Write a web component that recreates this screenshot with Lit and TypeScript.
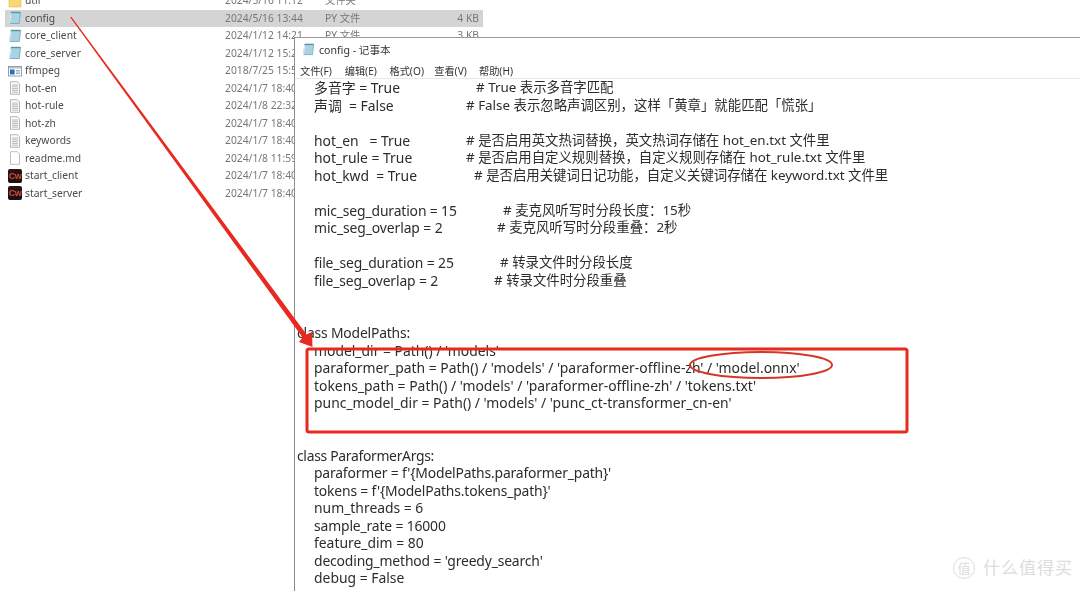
import { LitElement, html, css, svg } from "lit";
import { customElement } from "lit/decorators.js";

type Kind = "folder" | "note" | "exe" | "txt" | "blank" | "cw";
const files: { n: string; d: string; t?: string; s?: string; k: Kind; sel?: boolean }[] = [
  { n: "util", d: "2024/5/16 11:12", t: "文件夹", k: "folder" },
  { n: "config", d: "2024/5/16 13:44", t: "PY 文件", s: "4 KB", k: "note", sel: true },
  { n: "core_client", d: "2024/1/12 14:21", t: "PY 文件", s: "3 KB", k: "note" },
  { n: "core_server", d: "2024/1/12 15:21", k: "note" },
  { n: "ffmpeg", d: "2018/7/25 15:55", k: "exe" },
  { n: "hot-en", d: "2024/1/7 18:40", k: "txt" },
  { n: "hot-rule", d: "2024/1/8 22:32", k: "txt" },
  { n: "hot-zh", d: "2024/1/7 18:40", k: "txt" },
  { n: "keywords", d: "2024/1/7 18:40", k: "txt" },
  { n: "readme.md", d: "2024/1/8 11:59", k: "blank" },
  { n: "start_client", d: "2024/1/7 18:40", k: "cw" },
  { n: "start_server", d: "2024/1/7 18:40", k: "cw" },
];

// [code, comment, comment x, letter-spacing of the code]
const lines: [string, string?, number?, number?][] = [
  ["多音字 = True", "# True 表示多音字匹配", 476],
  ["声调  = False", "# False 表示忽略声调区别，这样「黄章」就能匹配「慌张」", 466],
  [""],
  ["hot_en   = True", "# 是否启用英文热词替换，英文热词存储在 hot_en.txt 文件里", 466],
  ["hot_rule = True", "# 是否启用自定义规则替换，自定义规则存储在 hot_rule.txt 文件里", 466],
  ["hot_kwd  = True", "# 是否启用关键词日记功能，自定义关键词存储在 keyword.txt 文件里", 474],
  [""],
  ["mic_seg_duration = 15", "# 麦克风听写时分段长度：15秒", 503, -0.14],
  ["mic_seg_overlap = 2", "# 麦克风听写时分段重叠：2秒", 497, -0.1],
  [""],
  ["file_seg_duration = 25", "# 转录文件时分段长度", 500, -0.11],
  ["file_seg_overlap = 2", "# 转录文件时分段重叠", 494, -0.15],
  [""],
  [""],
  ["!class ModelPaths:", undefined, undefined, -0.18],
  ["model_dir = Path() / 'models'"],
  ["paraformer_path = Path() / 'models' / 'paraformer-offline-zh' / 'model.onnx'"],
  ["tokens_path = Path() / 'models' / 'paraformer-offline-zh' / 'tokens.txt'"],
  ["punc_model_dir = Path() / 'models' / 'punc_ct-transformer_cn-en'"],
  [""],
  [""],
  ["!class ParaformerArgs:", undefined, undefined, -0.3],
  ["paraformer = f'{ModelPaths.paraformer_path}'", undefined, undefined, -0.18],
  ["tokens = f'{ModelPaths.tokens_path}'", undefined, undefined, -0.17],
  ["num_threads = 6"],
  ["sample_rate = 16000", undefined, undefined, -0.15],
  ["feature_dim = 80"],
  ["decoding_method = 'greedy_search'", undefined, undefined, -0.15],
  ["debug = False"],
];

const noteIcon = svg`<svg class="ic" viewBox="0 0 14 14"><path d="M3 1.5h9.5l-1.2 11H1.6z" fill="#a9d3e2" stroke="#6fa3b8" stroke-width=".8"/><path d="M3 1.5h9.5" stroke="#5f8da3" stroke-width="1.4"/><path d="M3 2.4 1.6 12.5" stroke="#dff0f5" stroke-width="1.2"/></svg>`;

function icon(k: Kind) {
  switch (k) {
    case "folder":
      return svg`<svg class="ic" viewBox="0 0 14 14"><path d="M1 2h4l1.5 1.5H13V13H1z" fill="#f8d775" stroke="#e2b84e" stroke-width=".6"/></svg>`;
    case "note":
      return noteIcon;
    case "exe":
      return svg`<svg class="ic" viewBox="0 0 14 14"><rect x=".5" y="2.5" width="13" height="9.5" fill="#fff" stroke="#7d8794" stroke-width=".8"/><rect x="1" y="3" width="12" height="1.6" fill="#b9c3cf"/><rect x="2" y="5.5" width="4.6" height="5" fill="#2a6fc0"/><path d="M8 6.5h4M8 8h4M8 9.5h4" stroke="#8aa4bf" stroke-width=".9"/></svg>`;
    case "txt":
      return svg`<svg class="ic" viewBox="0 0 14 14"><path d="M2.5.7h6.8l2.2 2.2v10.4h-9z" fill="#fbfbfb" stroke="#a5a5a5" stroke-width=".8"/><path d="M4 4h6M4 5.8h6M4 7.6h6M4 9.4h6M4 11.2h6" stroke="#a8a8a8" stroke-width=".8"/></svg>`;
    case "blank":
      return svg`<svg class="ic" viewBox="0 0 14 14"><path d="M2.5.7h6.8l2.2 2.2v10.4h-9z" fill="#fff" stroke="#b0b0b0" stroke-width=".8"/></svg>`;
    case "cw":
      return html`<span class="cw">Cw</span>`;
  }
}

@customElement("app-root")
export class AppRoot extends LitElement {
  static styles = css`
    :host { display: block; width: 1080px; height: 591px; position: relative; overflow: hidden; background: #fff; font-family: "Noto Sans", "Noto Sans CJK SC", sans-serif; }
    .shade { position: absolute; inset: 0; filter: blur(0.35px); }
    .list { display: flex; flex-direction: column; margin-top: -8px; margin-left: 5px; width: 478px; font-size: 10.3px; color: #777; }
    .row { display: grid; grid-template-columns: 20px 200px 100px 1fr auto; height: 17.5px; flex: none; align-items: center; line-height: 17px; white-space: nowrap; }
    .row.sel { background: #d4d4d4; }
    .name { color: #4b4b4b; }
    .size { padding-right: 4px; }
    .ic { display: block; width: 14px; height: 14px; margin-left: 3px; }
    .cw { display: block; width: 14px; height: 14px; margin-left: 3px; border-radius: 2px; background: linear-gradient(#2b1414, #1c1010); color: #d8473a; font: 700 9px/14px "Liberation Sans", sans-serif; text-align: center; letter-spacing: -0.5px; }
    .win { position: absolute; left: 294px; top: 37px; right: 0; bottom: 0; background: #fff; border-left: 1px solid #8e8e8e; border-top: 1px solid #9a9a9a; display: flex; flex-direction: column; }
    .title { display: flex; align-items: center; gap: 4px; height: 22px; flex: none; padding-left: 7px; font-size: 10.6px; color: #333; }
    .title .ic { margin: 0; width: 13px; height: 13px; }
    .menu { display: flex; height: 16px; padding-top: 2px; flex: none; align-items: center; padding-left: 5px; gap: 8px; font-size: 10.2px; color: #333; border-bottom: 1px solid #e9e9e9; }
    .menu span { width: 36.75px; white-space: nowrap; }
    .text { padding: 0 0 0 2px; font-size: 13.9px; color: #2c2c2c; }
    .ln { display: flex; height: 17.5px; line-height: 17.5px; white-space: pre; padding-left: 17px; }
    .ln.head { padding-left: 0; }
    .code { flex: none; }
    .cm { font-size: 13.4px; }
    .ann { position: absolute; inset: 0; width: 1080px; height: 591px; pointer-events: none; }
    .wm { position: absolute; left: 953px; top: 557px; display: flex; align-items: center; gap: 8px; color: #dcdcdc; font-size: 17px; letter-spacing: 1px; line-height: 22px; white-space: nowrap; }
    .wm i { display: block; width: 20px; height: 20px; border: 1px solid #dedede; border-radius: 50%; font-style: normal; font-size: 13px; line-height: 20px; text-align: center; letter-spacing: 0; }
  `;

  render() {
    return html`
      <div class="shade">
        <div class="list">
          ${files.map(
            (f) => html`<div class="row ${f.sel ? "sel" : ""}">
              ${icon(f.k)}
              <span class="name">${f.n}</span>
              <span>${f.d}</span>
              <span>${f.t ?? ""}</span>
              <span class="size">${f.s ?? ""}</span>
            </div>`
          )}
        </div>
        <div class="win">
          <div class="title">${noteIcon}<span>config - 记事本</span></div>
          <div class="menu">
            <span>文件(F)</span><span>编辑(E)</span><span>格式(O)</span><span>查看(V)</span><span>帮助(H)</span>
          </div>
          <div class="text">
            ${lines.map(([c, cm, x, ls]) => {
              const head = c.startsWith("!");
              const code = head ? c.slice(1) : c;
              const st = (x ? `width:${x - 314}px;` : "") + (ls ? `letter-spacing:${ls}px;` : "");
              return html`<div class="ln ${head ? "head" : ""}">
                <span class="code" style=${st}>${code}</span>${cm ? html`<span class="cm">${cm}</span>` : ""}
              </div>`;
            })}
          </div>
        </div>
      </div>
      <svg class="ann" viewBox="0 0 1080 591">
        <path d="M70 17 L71.5 17 L306.6 334.5 L312 332 L312.5 347 L299 342 L302.6 337.5 Z" fill="#e8291f"/>
        <rect x="307" y="349" width="600" height="83" rx="2" fill="none" stroke="#e8291f" stroke-width="3"/>
        <ellipse cx="761" cy="365" rx="71" ry="13" fill="none" stroke="#d4372a" stroke-width="2"/>
      </svg>
      <div class="wm"><i>值</i><span>什么值得买</span></div>
    `;
  }
}
